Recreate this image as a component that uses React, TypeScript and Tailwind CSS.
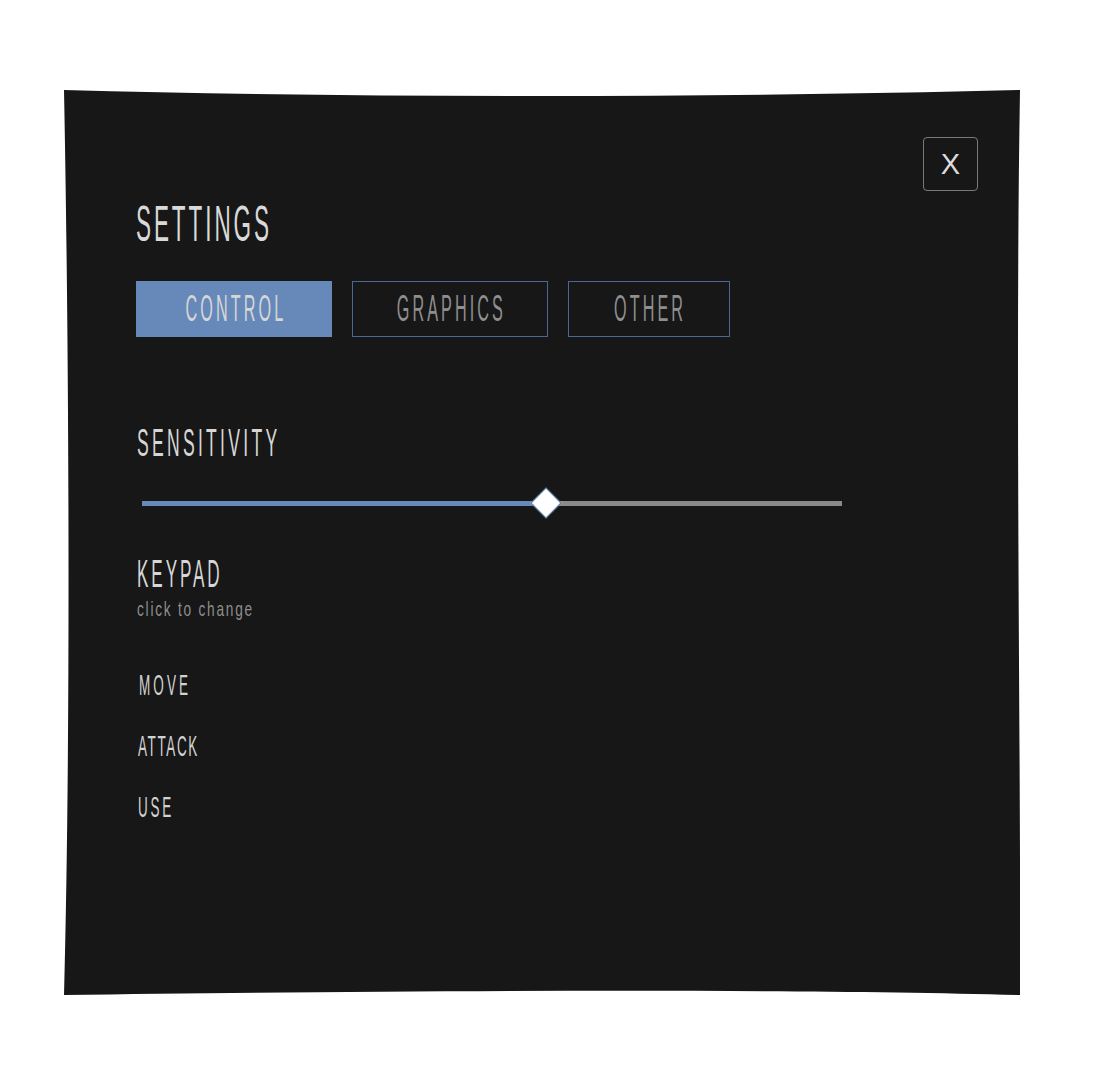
import type { ReactNode } from 'react'

const FONT = { fontFamily: '"Liberation Sans", Arial, sans-serif' }

// condensed look: Arial squeezed horizontally, layout width stays the same
function Cond({ children, className = '' }: { children: ReactNode; className?: string }) {
  return (
    <span className={`inline-block whitespace-nowrap origin-left scale-x-[0.45] ${className}`}>
      {children}
    </span>
  )
}

function Tab({ label, active, width }: { label: string; active?: boolean; width: string }) {
  return (
    <button
      type="button"
      className={`${width} h-[56px] flex items-center justify-center overflow-hidden ${
        active ? 'bg-[#6689b9] text-[#d6d6d6]' : 'border border-[#4a6792] text-[#8e8e8e]'
      }`}
    >
      <span className="inline-block whitespace-nowrap origin-center scale-x-[0.45] text-[36px] leading-none tracking-[0.19em] pl-[0.19em]">
        {label}
      </span>
    </button>
  )
}

function Slider({ value }: { value: number }) {
  const pos = Math.round(700 * value)
  return (
    <div className="relative ml-[6px] w-[700px] h-[32px] flex items-center">
      <div className="flex w-full h-[5px]">
        <div className="h-full bg-[#6689b9]" style={{ width: pos }} />
        <div className="h-full flex-1 bg-[#8a8a8a]" />
      </div>
      <div
        className="absolute top-[5px] w-[22px] h-[22px] rotate-45 bg-white border border-[#4f72a3]"
        style={{ left: pos - 11 }}
      />
    </div>
  )
}

export default function App() {
  return (
    <div className="w-[1098px] h-[1080px] bg-white pt-[90px] pl-[64px]" style={FONT}>
      <div className="relative w-[956px] h-[905px]">
        <svg className="absolute inset-0" width="956" height="905" viewBox="0 0 956 905">
          <path
            d="M0,0 C300,8 650,8 956,0 C951,300 957,650 956,905 C700,898 300,901 0,905 C7,650 5,250 0,0 Z"
            fill="#171717"
          />
        </svg>

        <div className="relative flex flex-col pt-[47px] pl-[72px] pr-[42px]">
          <div className="flex justify-end">
            <button
              type="button"
              className="w-[55px] h-[54px] rounded-[4px] border border-[#7a7a7a] text-[#dcdcdc] text-[29px] leading-none flex items-center justify-center"
            >
              X
            </button>
          </div>

          <h1 className="mt-[8px] h-[50px] text-[50px] leading-none text-[#d9d9d9] font-normal">
            <Cond className="tracking-[0.13em]">SETTINGS</Cond>
          </h1>

          <div className="mt-[32px] flex gap-[20px]">
            <Tab label="CONTROL" active width="w-[196px]" />
            <Tab label="GRAPHICS" width="w-[196px]" />
            <Tab label="OTHER" width="w-[162px]" />
          </div>

          <h2 className="mt-[86px] ml-[1px] h-[39px] text-[39px] leading-none text-[#d6d6d6] font-normal">
            <Cond className="tracking-[0.187em]">SENSITIVITY</Cond>
          </h2>

          <div className="mt-[25px]">
            <Slider value={0.577} />
          </div>

          <h2 className="mt-[36px] ml-[1px] h-[38px] text-[38px] leading-none text-[#d6d6d6] font-normal">
            <Cond className="tracking-[0.17em]">KEYPAD</Cond>
          </h2>
          <p className="mt-[5px] ml-[1px] h-[21px] text-[21px] leading-none text-[#8e8e8e]">
            <span className="inline-block whitespace-nowrap origin-left scale-x-[0.65] tracking-[0.13em]">
              click to change
            </span>
          </p>

          <ul className="mt-[51px] flex flex-col gap-[31px] text-[30px] leading-none text-[#d2d2d2]">
            <li className="h-[30px] ml-[3px]">
              <Cond className="tracking-[0.23em]">MOVE</Cond>
            </li>
            <li className="h-[30px] ml-[2px]">
              <Cond className="tracking-[0.12em]">ATTACK</Cond>
            </li>
            <li className="h-[30px] ml-[2px]">
              <Cond className="tracking-[0.2em]">USE</Cond>
            </li>
          </ul>
        </div>
      </div>
    </div>
  )
}
